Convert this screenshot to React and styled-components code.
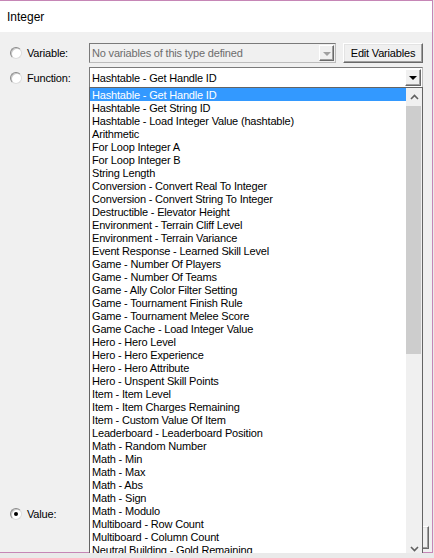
import React from "react";
import styled, { createGlobalStyle } from "styled-components";

const GlobalStyle = createGlobalStyle`
  html, body {
    margin: 0;
    padding: 0;
    background: #eaeaea;
  }
  body {
    font-family: "Liberation Sans", Arial, sans-serif;
    font-size: 11px;
    letter-spacing: -0.18px;
    color: #000;
  }
`;

const Window = styled.div`
  width: 433px;
  height: 553px;
  box-sizing: border-box;
  border-top: 1px solid #c686b6;
  border-right: 1px solid #c686b6;
  border-bottom: 1px solid #c686b6;
  display: flex;
  flex-direction: column;
  background: #f0f0f0;
`;

const TitleBar = styled.div`
  height: 31px;
  flex: none;
  background: #ffffff;
  display: flex;
  align-items: center;
  padding-left: 7px;
  font-size: 12px;
  letter-spacing: 0;
  color: #000;
`;

const Body = styled.div`
  flex: 1;
  display: flex;
  flex-direction: column;
  padding: 11px 3px 3px 10px;
`;

const Row = styled.div`
  display: flex;
  align-items: center;
  height: ${(p) => p.$h || 20}px;
  margin-top: ${(p) => p.$mt || 0}px;
`;

const Choice = styled.label`
  width: 79px;
  flex: none;
  display: flex;
  align-items: center;
`;

const Radio = styled.span`
  width: 12px;
  height: 12px;
  box-sizing: border-box;
  border-radius: 50%;
  border: 1px solid;
  border-color: #8a8a8a #dcdcdc #dcdcdc #8a8a8a;
  box-shadow: inset 1px 1px 0 #c8c8c8;
  background: #ffffff;
  margin-right: 5px;
  display: flex;
  align-items: center;
  justify-content: center;

  &::after {
    content: "";
    width: 4px;
    height: 4px;
    border-radius: 50%;
    background: ${(p) => (p.$checked ? "#000" : "transparent")};
  }
`;

const Combo = styled.div`
  position: relative;
  box-sizing: border-box;
  width: ${(p) => p.$w}px;
  height: 100%;
  border: 1px solid;
  border-color: #7a7a7a #bcbcbc #bcbcbc #7a7a7a;
  background: ${(p) => (p.$disabled ? "#f0f0f0" : "#ffffff")};
  color: ${(p) => (p.$disabled ? "#6d6d6d" : "#000")};
  display: flex;
  align-items: center;
  padding-left: 2px;
`;

const ComboText = styled.span`
  flex: 1;
  white-space: nowrap;
  overflow: hidden;
`;

const DropButton = styled.span`
  width: ${(p) => p.$w}px;
  height: calc(100% - 2px);
  margin-right: 1px;
  box-sizing: border-box;
  background: #f0f0f0;
  border: 1px solid;
  border-color: #ffffff #696969 #696969 #ffffff;
  box-shadow: inset -1px -1px 0 #a0a0a0;
  display: flex;
  align-items: center;
  justify-content: center;

  &::after {
    content: "";
    border-left: 4px solid transparent;
    border-right: 4px solid transparent;
    border-top: 4px solid ${(p) => (p.$disabled ? "#a0a0a0" : "#000")};
    margin-top: 1px;
  }
`;

const Button = styled.button`
  box-sizing: border-box;
  width: ${(p) => p.$w || 75}px;
  height: ${(p) => p.$h || 23}px;
  padding: 0;
  margin-left: ${(p) => p.$ml || 0}px;
  font-family: inherit;
  font-size: 11px;
  letter-spacing: inherit;
  color: #000;
  background: #f0f0f0;
  border: 1px solid;
  border-color: #ffffff #696969 #696969 #ffffff;
  box-shadow: inset -1px -1px 0 #a0a0a0, inset 1px 1px 0 #e3e3e3;
`;

const Spacer = styled.div`
  flex: 1;
`;

const ButtonRow = styled.div`
  display: flex;
  justify-content: flex-end;
  gap: 6px;
  margin-top: 2px;
`;

const List = styled.div`
  position: absolute;
  left: -1px;
  top: 100%;
  width: 334px;
  height: 471px;
  box-sizing: border-box;
  border: 1px solid #646464;
  background: #ffffff;
  display: flex;
  z-index: 10;
`;

const Items = styled.div`
  flex: 1;
  display: flex;
  flex-direction: column;
`;

const Item = styled.div`
  height: 13px;
  box-sizing: border-box;
  padding: 1px 0 0 2px;
  line-height: 13px;
  white-space: nowrap;
  color: ${(p) => (p.$selected ? "#ffffff" : "#000")};
  background: ${(p) => (p.$selected ? "#3399ff" : "transparent")};
`;

const ScrollBar = styled.div`
  width: 16px;
  flex: none;
  background: #f0f0f0;
  display: flex;
  flex-direction: column;
`;

const ScrollArrow = styled.div`
  height: 17px;
  display: flex;
  align-items: center;
  justify-content: center;
`;

const Thumb = styled.div`
  height: 248px;
  width: 15px;
  margin-top: 1px;
  background: #cdcdcd;
`;

const items = [
  "Hashtable - Get Handle ID",
  "Hashtable - Get String ID",
  "Hashtable - Load Integer Value (hashtable)",
  "Arithmetic",
  "For Loop Integer A",
  "For Loop Integer B",
  "String Length",
  "Conversion - Convert Real To Integer",
  "Conversion - Convert String To Integer",
  "Destructible - Elevator Height",
  "Environment - Terrain Cliff Level",
  "Environment - Terrain Variance",
  "Event Response - Learned Skill Level",
  "Game - Number Of Players",
  "Game - Number Of Teams",
  "Game - Ally Color Filter Setting",
  "Game - Tournament Finish Rule",
  "Game - Tournament Melee Score",
  "Game Cache - Load Integer Value",
  "Hero - Hero Level",
  "Hero - Hero Experience",
  "Hero - Hero Attribute",
  "Hero - Unspent Skill Points",
  "Item - Item Level",
  "Item - Item Charges Remaining",
  "Item - Custom Value Of Item",
  "Leaderboard - Leaderboard Position",
  "Math - Random Number",
  "Math - Min",
  "Math - Max",
  "Math - Abs",
  "Math - Sign",
  "Math - Modulo",
  "Multiboard - Row Count",
  "Multiboard - Column Count",
  "Neutral Building - Gold Remaining",
];

const Chevron = ({ down }) => (
  <svg width="9" height="6" viewBox="0 0 9 6">
    <path
      d={down ? "M1 1 L4.5 4.5 L8 1" : "M1 5 L4.5 1.5 L8 5"}
      fill="none"
      stroke="#606060"
      strokeWidth="1.6"
    />
  </svg>
);

const App = () => {
  return (
    <>
      <GlobalStyle />
      <Window>
        <TitleBar>Integer</TitleBar>
        <Body>
          <Row>
            <Choice>
              <Radio />
              Variable:
            </Choice>
            <Combo $w={247} $disabled>
              <ComboText>No variables of this type defined</ComboText>
              <DropButton $w={15} $disabled />
            </Combo>
            <Button $w={80} $h={20} $ml={7}>
              Edit Variables
            </Button>
          </Row>
          <Row $h={21} $mt={4}>
            <Choice>
              <Radio />
              Function:
            </Choice>
            <Combo $w={334}>
              <ComboText>Hashtable - Get Handle ID</ComboText>
              <DropButton $w={16} />
              <List>
                <Items>
                  {items.map((text, i) => (
                    <Item key={i} $selected={i === 0}>
                      {text}
                    </Item>
                  ))}
                </Items>
                <ScrollBar>
                  <ScrollArrow>
                    <Chevron />
                  </ScrollArrow>
                  <Thumb />
                  <Spacer />
                  <ScrollArrow>
                    <Chevron down />
                  </ScrollArrow>
                </ScrollBar>
              </List>
            </Combo>
          </Row>
          <Spacer />
          <Row>
            <Choice>
              <Radio $checked />
              Value:
            </Choice>
          </Row>
          <ButtonRow>
            <Button>OK</Button>
          </ButtonRow>
        </Body>
      </Window>
    </>
  );
};

export default App;
